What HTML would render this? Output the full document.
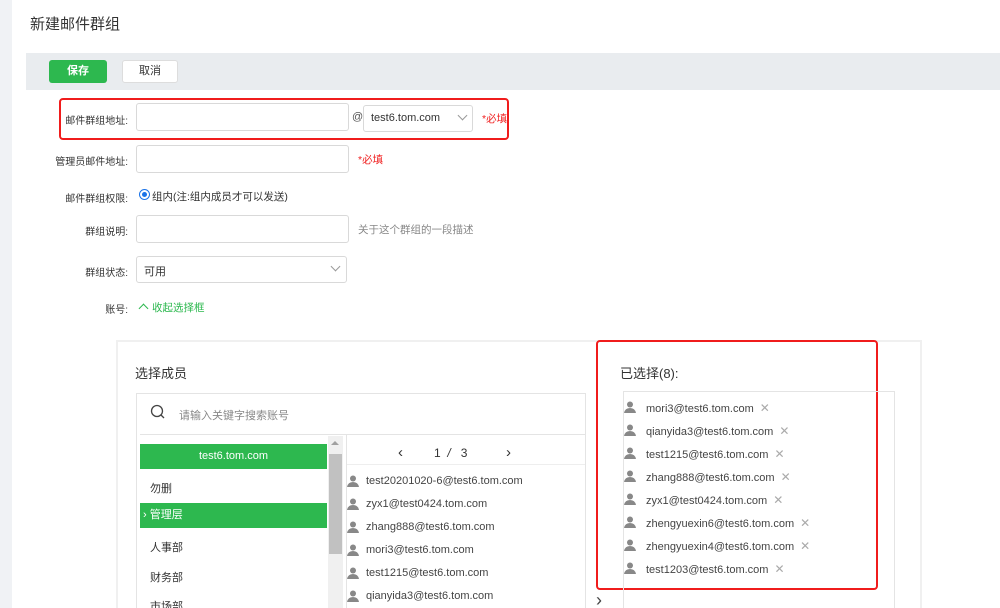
<!DOCTYPE html>
<html><head><meta charset="utf-8"><style>
*{margin:0;padding:0;box-sizing:border-box}
html,body{width:1000px;height:608px;overflow:hidden}
body{background:#fff;font-family:"Liberation Sans","Noto Sans CJK SC",sans-serif;font-size:11px;color:#333;position:relative}
.a{position:absolute}
.lbl{position:absolute;width:140px;text-align:right;left:-12px;font-size:10px;color:#333;white-space:nowrap}
.inp{position:absolute;border:1px solid #d9d9d9;border-radius:3px;background:#fff}
.req{position:absolute;color:#f02020;font-size:10.5px}
.chev{position:absolute;width:7px;height:7px;border-right:1px solid #999;border-bottom:1px solid #999;transform:rotate(45deg)}
.u{position:absolute;width:12px;height:12px}
.it{position:absolute;font-size:11px;color:#444;white-space:nowrap}
.x{color:#aaa;font-size:12px;margin-left:6px}
</style></head><body>
<div class="a" style="left:0;top:0;width:12px;height:608px;background:#f0f2f5"></div>
<div class="a" style="left:30px;top:13px;font-size:15px;color:#333">新建邮件群组</div>
<div class="a" style="left:26px;top:53px;width:974px;height:37px;background:#e9ecef"></div>
<div class="a" style="left:49px;top:60px;width:58px;height:23px;background:#2db84f;border-radius:3px;color:#fff;text-align:center;line-height:23px;font-weight:bold">保存</div>
<div class="a" style="left:122px;top:60px;width:56px;height:23px;background:#fff;border:1px solid #ddd;border-radius:3px;text-align:center;line-height:21px">取消</div>

<div class="a" style="left:59px;top:98px;width:450px;height:42px;border:2px solid #f01c1c;border-radius:4px"></div>
<div class="lbl" style="top:112px">邮件群组地址:</div>
<div class="inp" style="left:136px;top:103px;width:213px;height:28px"></div>
<div class="a" style="left:352px;top:111px;color:#555">@</div>
<div class="inp" style="left:363px;top:105px;width:110px;height:27px"><span style="position:absolute;left:7px;top:6px;font-size:11px">test6.tom.com</span></div>
<div class="chev" style="left:459px;top:112px"></div>
<div class="req" style="left:482px;top:111px">*必填</div>

<div class="lbl" style="top:153px">管理员邮件地址:</div>
<div class="inp" style="left:136px;top:145px;width:213px;height:28px"></div>
<div class="req" style="left:358px;top:152px">*必填</div>

<div class="lbl" style="top:190px">邮件群组权限:</div>
<div class="a" style="left:139px;top:189px;width:11px;height:11px;border-radius:50%;border:1px solid #1a73e8;background:#fff"><div style="margin:2px;width:5px;height:5px;border-radius:50%;background:#1a73e8"></div></div>
<div class="a" style="left:152px;top:189px;color:#333;font-size:10.5px">组内(注:组内成员才可以发送)</div>

<div class="lbl" style="top:223px">群组说明:</div>
<div class="inp" style="left:136px;top:215px;width:213px;height:28px"></div>
<div class="a" style="left:358px;top:222px;color:#888;font-size:10.5px">关于这个群组的一段描述</div>

<div class="lbl" style="top:264px">群组状态:</div>
<div class="inp" style="left:136px;top:256px;width:211px;height:27px"><span style="position:absolute;left:7px;top:6px">可用</span></div>
<div class="chev" style="left:332px;top:263px"></div>

<div class="lbl" style="top:301px">账号:</div>
<div class="a" style="left:137px;top:300px;color:#2db84f;font-size:10.5px"><span style="display:inline-block;width:7px;height:7px;border-left:1px solid #2db84f;border-top:1px solid #2db84f;transform:rotate(45deg);margin:0 5px 0 3px;position:relative;top:1px"></span>收起选择框</div>

<div class="a" style="left:116px;top:340px;width:806px;height:280px;border:2px solid #f0f0f0;border-bottom:none"></div>
<div class="a" style="left:135px;top:363px;font-size:13px;color:#333">选择成员</div>
<div class="a" style="left:136px;top:393px;width:450px;height:220px;border:1px solid #e4e4e4"></div>
<svg class="a" style="left:150px;top:404px" width="16" height="16"><circle cx="7" cy="7" r="5.5" fill="none" stroke="#444" stroke-width="1.3"/><line x1="11" y1="11" x2="14" y2="14" stroke="#444" stroke-width="1.3"/></svg>
<div class="a" style="left:179px;top:407px;font-size:11px;color:#888">请输入关键字搜索账号</div>
<div class="a" style="left:140px;top:434px;width:445px;height:1px;background:#e4e4e4"></div>
<div class="a" style="left:140px;top:444px;width:187px;height:25px;background:#2db84f;color:#fff;text-align:center;line-height:25px">test6.tom.com</div>
<div class="a" style="left:150px;top:480px">勿删</div>
<div class="a" style="left:140px;top:503px;width:187px;height:25px;background:#2db84f;color:#fff;line-height:25px;padding-left:3px">›&nbsp;管理层</div>
<div class="a" style="left:150px;top:539px">人事部</div>
<div class="a" style="left:150px;top:569px">财务部</div>
<div class="a" style="left:150px;top:598px">市场部</div>
<div class="a" style="left:328px;top:436px;width:15px;height:172px;background:#f0f0f0"></div>
<div class="a" style="left:329px;top:454px;width:13px;height:100px;background:#c1c1c1"></div>
<div class="a" style="left:331px;top:441px;width:0;height:0;border-left:4px solid transparent;border-right:4px solid transparent;border-bottom:4px solid #a0a0a0"></div>
<div class="a" style="left:346px;top:435px;width:1px;height:173px;background:#e4e4e4"></div>
<div class="a" style="left:347px;top:464px;width:238px;height:1px;background:#eee"></div>
<div class="a" style="left:398px;top:444px;font-size:15px;color:#333">‹</div>
<div class="a" style="left:434px;top:446px;font-size:12px">1&nbsp; <i>/</i> &nbsp; 3</div>
<div class="a" style="left:506px;top:444px;font-size:15px;color:#333">›</div>

<div class="a" style="left:596px;top:340px;width:282px;height:250px;border:2px solid #f01c1c;border-radius:4px"></div>
<div class="a" style="left:620px;top:363px;font-size:13px;color:#333">已选择(8):</div>
<div class="a" style="left:623px;top:391px;width:272px;height:220px;border:1px solid #e4e4e4"></div>
<div class="a" style="left:596px;top:590px;font-size:18px;color:#444">›</div>

<svg width="0" height="0" style="position:absolute"><defs><symbol id="p" viewBox="0 0 12 12"><circle cx="6" cy="3.5" r="3" fill="#888"/><path d="M0 12 Q1 7 6 7 Q11 7 12 12Z" fill="#888"/></symbol></defs></svg>

<div id="L"></div>
<script>
var L=["test20201020-6@test6.tom.com","zyx1@test0424.tom.com","zhang888@test6.tom.com","mori3@test6.tom.com","test1215@test6.tom.com","qianyida3@test6.tom.com"];
var R=["mori3@test6.tom.com","qianyida3@test6.tom.com","test1215@test6.tom.com","zhang888@test6.tom.com","zyx1@test0424.tom.com","zhengyuexin6@test6.tom.com","zhengyuexin4@test6.tom.com","test1203@test6.tom.com"];
var h="";
L.forEach(function(t,i){var y=475+i*23;h+='<svg class="u" style="left:347px;top:'+y+'px"><use href="#p"/></svg><div class="it" style="left:366px;top:'+(y)+'px">'+t+'</div>';});
R.forEach(function(t,i){var y=401+i*23;h+='<svg class="u" style="left:624px;top:'+y+'px"><use href="#p"/></svg><div class="it" style="left:646px;top:'+(y)+'px">'+t+'<span class="x">✕</span></div>';});
document.getElementById("L").innerHTML=h;
</script>
</body></html>
